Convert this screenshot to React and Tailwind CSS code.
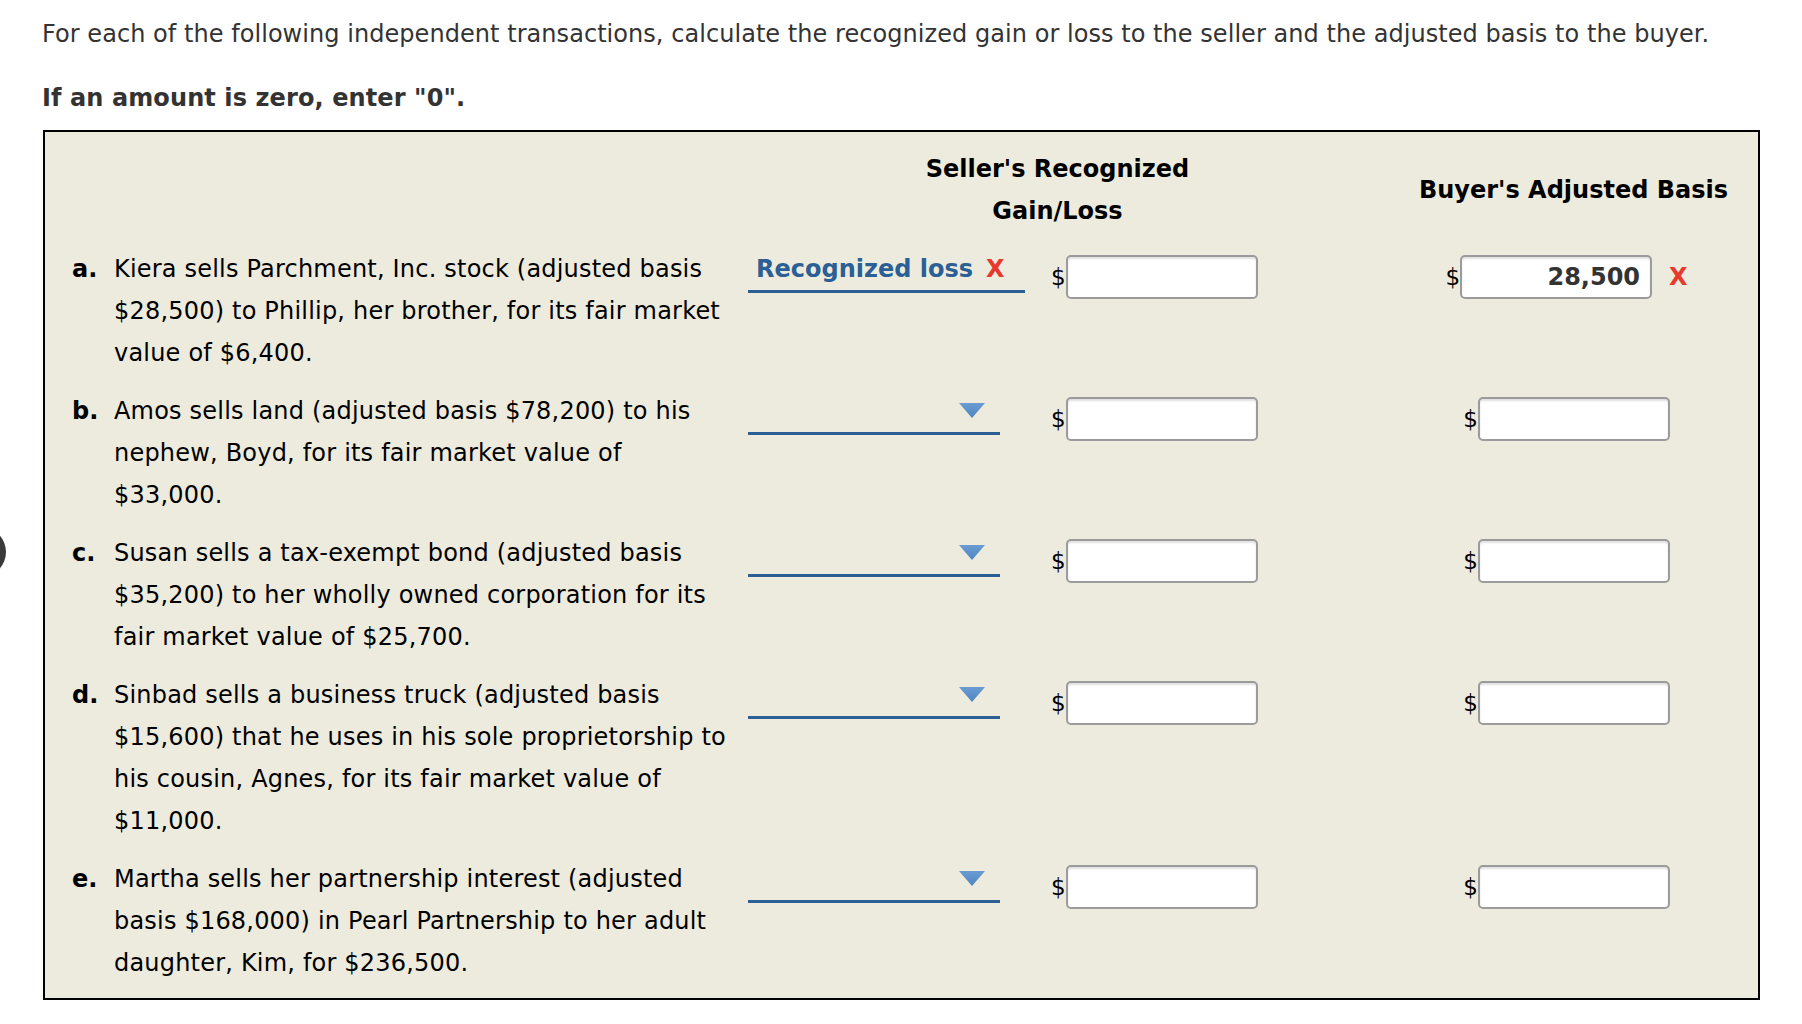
import React from "react";

const FONT = { fontFamily: '"DejaVu Sans", Verdana, "Liberation Sans", sans-serif' };

const rows = [
  {
    l: "a.",
    lines: [
      "Kiera sells Parchment, Inc. stock (adjusted basis",
      "$28,500) to Phillip, her brother, for its fair market",
      "value of $6,400.",
    ],
    answered: true,
  },
  {
    l: "b.",
    lines: [
      "Amos sells land (adjusted basis $78,200) to his",
      "nephew, Boyd, for its fair market value of",
      "$33,000.",
    ],
  },
  {
    l: "c.",
    lines: [
      "Susan sells a tax-exempt bond (adjusted basis",
      "$35,200) to her wholly owned corporation for its",
      "fair market value of $25,700.",
    ],
  },
  {
    l: "d.",
    lines: [
      "Sinbad sells a business truck (adjusted basis",
      "$15,600) that he uses in his sole proprietorship to",
      "his cousin, Agnes, for its fair market value of",
      "$11,000.",
    ],
  },
  {
    l: "e.",
    lines: [
      "Martha sells her partnership interest (adjusted",
      "basis $168,000) in Pearl Partnership to her adult",
      "daughter, Kim, for $236,500.",
    ],
  },
];

function Box({ value }) {
  return (
    <div className="flex items-center mt-[7px]">
      <span className="text-[23px] leading-[28px] text-black">$</span>
      <div className="w-[192px] h-[44px] bg-white border-2 border-[#9b9b9b] rounded-[5px] shadow-[inset_0_2px_2px_rgba(0,0,0,0.12)] flex items-center justify-end pr-[10px]">
        {value ? (
          <span className="text-[24px] font-bold text-[#333]">{value}</span>
        ) : null}
      </div>
    </div>
  );
}

function RedX({ className = "" }) {
  return (
    <span className={"text-[24px] font-bold text-[#e8392c] leading-[42px] " + className}>X</span>
  );
}

function Dropdown({ answered }) {
  if (answered) {
    return (
      <div className="inline-flex items-center h-[45px] border-b-[3px] border-[#2b5f95] pl-[8px] pr-[20px] min-w-[252px]">
        <span className="text-[24px] font-bold text-[#2b5f95] leading-[42px] whitespace-nowrap">
          Recognized loss
        </span>
        <RedX className="ml-[13px]" />
      </div>
    );
  }
  return (
    <div className="flex justify-end items-start h-[45px] w-[252px] border-b-[3px] border-[#2b5f95] pr-[14px] pt-[13px]">
      <svg width="28" height="15" viewBox="0 0 28 15">
        <defs>
          <linearGradient id="tri" x1="0" y1="0" x2="0" y2="1">
            <stop offset="0" stopColor="#6b9bd2" />
            <stop offset="1" stopColor="#4f86c2" />
          </linearGradient>
        </defs>
        <polygon points="1,0 27,0 14,15" fill="url(#tri)" />
      </svg>
    </div>
  );
}

export default function App() {
  return (
    <div className="relative min-h-[1024px] bg-white" style={FONT}>
      <div className="absolute left-[-44px] top-[527px] w-[50px] h-[50px] rounded-full bg-[#3a3a3a]" />
      <div className="pl-[42px] pt-[20px]">
        <p className="text-[24px] leading-[28px] text-[#333] whitespace-nowrap tracking-[0.05px]">
          For each of the following independent transactions, calculate the recognized gain or loss to the seller and the adjusted basis to the buyer.
        </p>
        <p className="mt-[36px] text-[24px] leading-[28px] font-bold text-[#333] tracking-[0.1px]">
          If an amount is zero, enter "0".
        </p>
        <div className="mt-[18px] ml-[1px] w-[1717px] border-2 border-black bg-[#edebdd] pb-[14px]">
          <div className="grid grid-cols-[695px_300px_335px_1fr] pt-4">
            <div />
            <div className="col-span-2 text-center text-[24px] font-bold leading-[42px] text-black">
              Seller's Recognized
              <br />
              Gain/Loss
            </div>
            <div className="flex items-center justify-center pl-[14px] text-[24px] font-bold leading-[42px] text-black">
              Buyer's Adjusted Basis
            </div>
          </div>
          {rows.map((r) => (
            <div key={r.l} className="grid grid-cols-[695px_300px_335px_1fr] pt-4">
              <div className="flex pl-[27px] text-[24px] leading-[42px] text-black">
                <span className="w-[42px] shrink-0 font-bold">{r.l}</span>
                <div className="tracking-[0.2px]">
                  {r.lines.map((t, i) => (
                    <div key={i} className="whitespace-nowrap">
                      {t}
                    </div>
                  ))}
                </div>
              </div>
              <div className="pl-[8px]">
                <Dropdown answered={r.answered} />
              </div>
              <div className="pl-[11px]">
                <Box />
              </div>
              <div className="flex justify-center items-start">
                {r.answered ? (
                  <div className="flex items-start">
                    <Box value="28,500" />
                    <RedX className="ml-[17px] mt-[8px]" />
                  </div>
                ) : (
                  <Box />
                )}
              </div>
            </div>
          ))}
        </div>
      </div>
    </div>
  );
}
